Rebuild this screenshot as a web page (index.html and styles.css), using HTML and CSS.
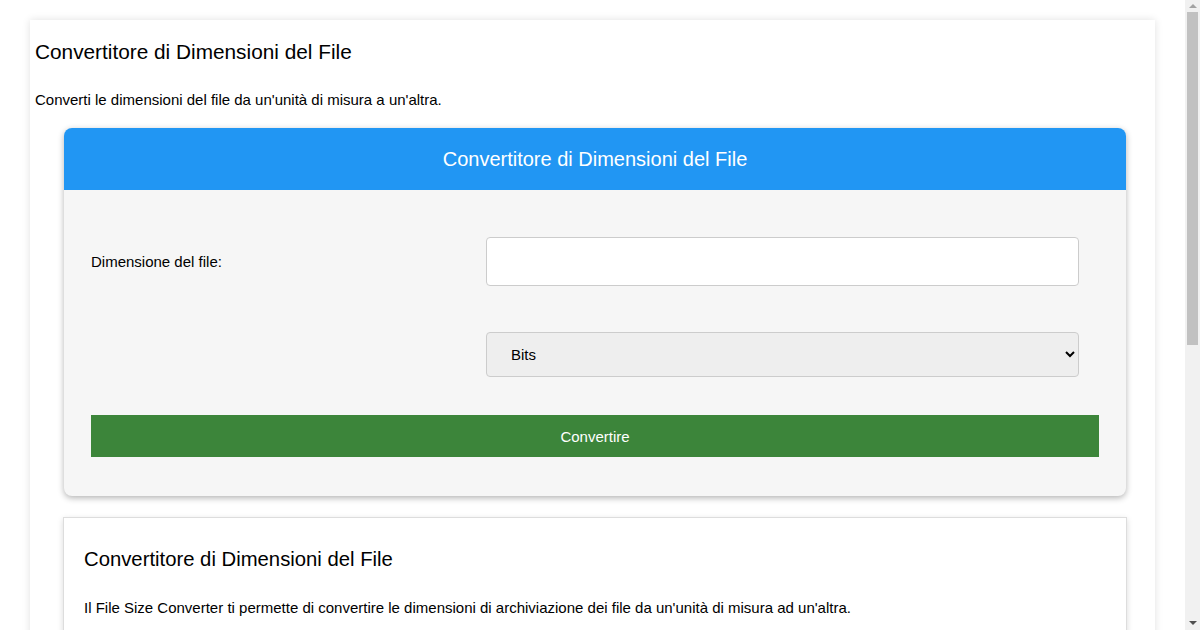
FILE: index.html
```html
<!DOCTYPE html>
<html lang="it">
<head>
    <meta charset="UTF-8">
    <meta name="viewport" content="width=device-width, initial-scale=1.0">
    <title>Convertitore di Dimensioni del File</title>
    <link rel="stylesheet" href="styles.css">
</head>
<body>
    <div class="container">
        <h1>Convertitore di Dimensioni del File</h1>
        <p class="intro">Converti le dimensioni del file da un'unità di misura a un'altra.</p>

        <div class="converter">
            <div class="converter-header">Convertitore di Dimensioni del File</div>
            <div class="converter-body">
                <div class="form-row">
                    <label for="size">Dimensione del file:</label>
                    <input type="text" id="size">
                </div>
                <div class="form-row">
                    <span></span>
                    <select id="unit">
                        <option>Bits</option>
                        <option>Bytes</option>
                        <option>Kilobytes</option>
                        <option>Megabytes</option>
                        <option>Gigabytes</option>
                        <option>Terabytes</option>
                    </select>
                </div>
                <button class="convert-btn">Convertire</button>
            </div>
        </div>

        <div class="info">
            <h2>Convertitore di Dimensioni del File</h2>
            <p>Il File Size Converter ti permette di convertire le dimensioni di archiviazione dei file da un'unità di misura ad un'altra.</p>
            <p>Inserisci la dimensione del file, scegli l'unità di partenza e premi il pulsante per vedere il valore in tutte le altre unità.</p>
            <h3>Unità supportate</h3>
            <ul>
                <li>Bits e Bytes</li>
                <li>Kilobytes e Megabytes</li>
                <li>Gigabytes e Terabytes</li>
                <li>Petabytes</li>
            </ul>
            <p>Tutti i calcoli vengono eseguiti direttamente nel browser.</p>
        </div>
    </div>

    <!-- fake window scrollbar, the headless browser does not draw one -->
    <div class="scrollbar" aria-hidden="true">
        <span class="arrow up"></span>
        <span class="thumb"></span>
        <span class="arrow down"></span>
    </div>
</body>
</html>
```

FILE: styles.css
```css
body {
    margin: 0;
    padding: 0 0 20px;
    background-color: #fff;
    font-family: "Liberation Sans", Arial, sans-serif;
    color: #000;
}

.container {
    width: 1125px;
    margin: 20px 0 0 30px;
    padding: 5px;
    box-sizing: border-box;
    background-color: #fff;
    box-shadow: 0 0 8px rgba(0, 0, 0, 0.12);
}

h1 {
    font-size: 20.8px;
    font-weight: normal;
    margin: 15px 0 27px;
}

.intro {
    font-size: 15px;
    margin: 0 0 20px;
}

.converter {
    width: 1062px;
    margin-left: 29px;
    border-radius: 8px;
    overflow: hidden;
    background-color: #f6f6f6;
    box-shadow: 0 2px 6px rgba(0, 0, 0, 0.3);
}

.converter-header {
    height: 62px;
    line-height: 62px;
    text-align: center;
    font-size: 20px;
    color: #fff;
    background-color: #2196f3;
}

.converter-body {
    padding: 47px 27px 39px;
}

.form-row {
    display: grid;
    grid-template-columns: 395px 593px;
    align-items: center;
    margin-bottom: 46px;
}

.form-row:nth-child(2) {
    margin-bottom: 38px;
}

.form-row label {
    font-size: 15px;
}

#size {
    height: 49px;
    box-sizing: border-box;
    border: 1px solid #ccc;
    border-radius: 4px;
    background-color: #fff;
    font-size: 15px;
    padding: 0 10px;
}

#unit {
    height: 45px;
    box-sizing: border-box;
    border: 1px solid #ccc;
    border-radius: 4px;
    background-color: #eee;
    font-family: "Liberation Sans", Arial, sans-serif;
    font-size: 15px;
    padding: 0 6px 0 20px;
    color: #000;
}

.convert-btn {
    display: block;
    width: 100%;
    height: 42px;
    border: none;
    background-color: #3c853a;
    color: #fff;
    font-family: "Liberation Sans", Arial, sans-serif;
    font-size: 15px;
    cursor: pointer;
}

.info {
    width: 1064px;
    box-sizing: border-box;
    margin: 21px 0 0 28px;
    padding: 0 20px 20px;
    border: 1px solid #ddd;
    box-shadow: 0 2px 6px rgba(0, 0, 0, 0.15);
    background-color: #fff;
}

.info h2 {
    font-size: 20.3px;
    font-weight: normal;
    margin: 30px 0 25px;
}

.info h3 {
    font-size: 17px;
    font-weight: normal;
    margin: 30px 0 16px;
}

.info p,
.info li {
    font-size: 15px;
    line-height: 1.6;
}

.info p {
    margin: 0 0 16px;
}

/* Scrollbar */
.scrollbar {
    position: fixed;
    top: 0;
    right: 0;
    width: 15px;
    height: 100vh;
    background-color: #f1f1f1;
    display: flex;
    flex-direction: column;
    align-items: center;
}

.scrollbar .thumb {
    width: 11px;
    height: 333px;
    margin-top: 1px;
    background-color: #c1c1c1;
}

.scrollbar .arrow {
    width: 0;
    height: 0;
    border-left: 4px solid transparent;
    border-right: 4px solid transparent;
}

.scrollbar .up {
    margin-top: 4px;
    border-bottom: 4px solid #a3a3a3;
    margin-bottom: 3px;
}

.scrollbar .down {
    margin-top: auto;
    margin-bottom: 5px;
    border-top: 4px solid #505050;
}
```
